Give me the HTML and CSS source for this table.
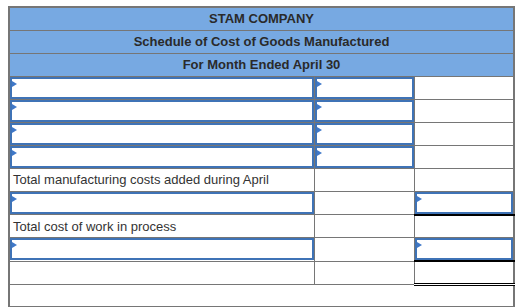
FILE: index.html
```html
<!DOCTYPE html>
<html>
<head>
<meta charset="utf-8">
<link rel="stylesheet" href="styles.css">
</head>
<body>
<table class="sheet">
  <colgroup>
    <col class="c1"><col class="c2"><col class="c3">
  </colgroup>
  <tr class="head"><td colspan="3">STAM COMPANY</td></tr>
  <tr class="head"><td colspan="3">Schedule of Cost of Goods Manufactured</td></tr>
  <tr class="head"><td colspan="3">For Month Ended April 30</td></tr>
  <tr><td><div class="inp"></div></td><td><div class="inp"></div></td><td></td></tr>
  <tr><td><div class="inp"></div></td><td><div class="inp"></div></td><td></td></tr>
  <tr><td><div class="inp"></div></td><td><div class="inp"></div></td><td></td></tr>
  <tr><td><div class="inp"></div></td><td><div class="inp"></div></td><td></td></tr>
  <tr><td class="label">Total manufacturing costs added during April</td><td></td><td></td></tr>
  <tr><td><div class="inp"></div></td><td></td><td class="single"><div class="inp"></div></td></tr>
  <tr><td class="label">Total cost of work in process</td><td></td><td></td></tr>
  <tr><td><div class="inp"></div></td><td></td><td class="single"><div class="inp"></div></td></tr>
  <tr><td></td><td></td><td class="double"></td></tr>
  <tr><td colspan="3"></td></tr>
</table>
</body>
</html>
```
FILE: styles.css
```css
html, body {
  margin: 0;
  padding: 0;
  background: #fff;
}
body {
  padding: 6px 0 0 8px;
  font-family: "Liberation Sans", Arial, sans-serif;
}
.sheet {
  border-collapse: collapse;
  table-layout: fixed;
  width: 506px;
  border: 2px solid #767676;
}
.c1 { width: 305px; }
.c2 { width: 100px; }
.c3 { width: 100px; }
.sheet td {
  border: 1px solid #767676;
  height: 23px;
  padding: 0;
  font-size: 13px;
  color: #333;
  box-sizing: border-box;
}
.head td {
  background: #77a9e2;
  text-align: center;
  font-weight: bold;
  color: #2a2a2a;
}
.sheet td.label {
  padding-left: 3px;
}
.sheet td.single {
  border-bottom: 2px solid #000;
}
.sheet td.double {
  border-bottom: 3px double #000;
}
.inp {
  position: relative;
  height: 22px;
  border: 2px solid #3f73b6;
  box-sizing: border-box;
  background: #fff;
}
.inp::before {
  content: "";
  position: absolute;
  left: 0;
  top: 2px;
  border-left: 5px solid #3f78c8;
  border-top: 3px solid transparent;
  border-bottom: 3px solid transparent;
}
```
